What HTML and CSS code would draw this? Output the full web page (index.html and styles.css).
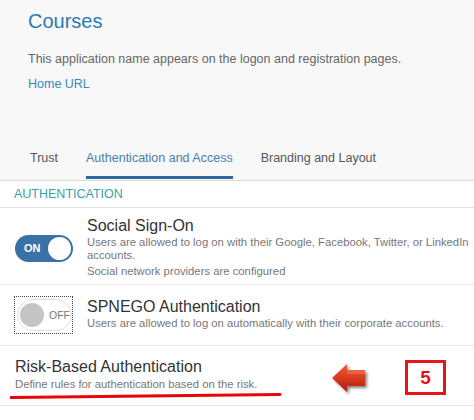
FILE: index.html
```html
<!DOCTYPE html>
<html>
<head>
<meta charset="utf-8">
<link rel="stylesheet" href="styles.css">
</head>
<body>
<div class="header">
  <h1 class="title">Courses</h1>
  <p class="desc">This application name appears on the logon and registration pages.</p>
  <a class="home">Home URL</a>
  <nav class="tabs">
    <span class="tab">Trust</span>
    <span class="tab active">Authentication and Access</span>
    <span class="tab">Branding and Layout</span>
  </nav>
</div>
<div class="section-head">AUTHENTICATION</div>
<div class="row row-social">
  <div class="toggle-col">
    <div class="toggle on"><span class="lbl">ON</span><span class="knob"></span></div>
  </div>
  <div class="text">
    <div class="row-title">Social Sign-On</div>
    <p class="row-desc"><span class="nowrap">Users are allowed to log on with their Google, Facebook, Twitter, or LinkedIn</span><br>accounts.</p>
    <p class="row-desc second">Social network providers are configured</p>
  </div>
</div>
<div class="row row-spnego">
  <div class="toggle-col">
    <div class="focus"><div class="toggle off"><span class="knob"></span><span class="lbl">OFF</span></div></div>
  </div>
  <div class="text">
    <div class="row-title">SPNEGO Authentication</div>
    <p class="row-desc">Users are allowed to log on automatically with their corporate accounts.</p>
  </div>
</div>
<div class="row row-risk">
  <div class="text">
    <div class="row-title">Risk-Based Authentication</div>
    <p class="row-desc">Define rules for authentication based on the risk.</p>
  </div>
  <svg class="underline" width="272" height="8" viewBox="0 0 272 8"><path d="M1 5.5 L270 2.5" stroke="#e8050a" stroke-width="3" stroke-linecap="round" fill="none"/></svg>
  <svg class="arrow" width="44" height="36" viewBox="0 0 44 36">
    <defs>
      <linearGradient id="ag" x1="0" y1="0" x2="0" y2="1">
        <stop offset="0" stop-color="#ee5a3c"/>
        <stop offset="0.5" stop-color="#d83a1f"/>
        <stop offset="1" stop-color="#a81c0c"/>
      </linearGradient>
      <filter id="sh" x="-30%" y="-30%" width="160%" height="160%">
        <feGaussianBlur in="SourceAlpha" stdDeviation="1.6"/>
        <feOffset dx="2" dy="2" result="b"/>
        <feComponentTransfer><feFuncA type="linear" slope="0.5"/></feComponentTransfer>
        <feMerge><feMergeNode/><feMergeNode in="SourceGraphic"/></feMerge>
      </filter>
    </defs>
    <path d="M3 16 L18 2 L18 8 L36 8 L36 24 L18 24 L18 30 Z" fill="url(#ag)" filter="url(#sh)"/>
    <path d="M18 8 L36 8 L36 12 L18 12 Z" fill="#f27a5c" opacity="0.5"/>
  </svg>
  <div class="badge">5</div>
</div>
</body>
</html>
```
FILE: styles.css
```css
* { box-sizing: border-box; }
body {
  margin: 0;
  width: 474px;
  height: 420px;
  overflow: hidden;
  background: #fff;
  font-family: "Liberation Sans", Arial, sans-serif;
}
.header {
  background: #f8f8f8;
  padding: 8px 0 0 28px;
  border-bottom: 1px solid #dcdcdc;
  height: 181px;
}
.title {
  margin: 0;
  font-size: 20px;
  line-height: 26px;
  font-weight: normal;
  color: #2a78b4;
}
.desc {
  margin: 16px 0 0;
  font-size: 12.5px;
  line-height: 18px;
  color: #666;
}
.home {
  display: block;
  margin-top: 7px;
  font-size: 12.5px;
  line-height: 18px;
  color: #3a86c2;
}
.tabs {
  display: flex;
  gap: 28px;
  margin-top: 56px;
  padding-left: 2px;
}
.tab {
  font-size: 12.5px;
  line-height: 18px;
  color: #555;
  padding-bottom: 9px;
  border-bottom: 3px solid transparent;
}
.tab.active {
  color: #4a7eab;
  border-bottom-color: #3068a0;
}
.section-head {
  height: 27px;
  padding-left: 14px;
  font-size: 12.5px;
  line-height: 26px;
  color: #3aa2a4;
  border-bottom: 1px solid #e2e2e2;
}
.row {
  display: flex;
  align-items: center;
  border-bottom: 1px solid #e6e6e6;
  position: relative;
}
.toggle-col {
  width: 87px;
  flex: none;
  padding-left: 15px;
}
.text {
  flex: 1;
  min-width: 0;
}
.row-title {
  font-size: 16px;
  line-height: 20px;
  color: #333;
}
.row-desc {
  margin: 0;
  font-size: 11.3px;
  line-height: 13px;
  color: #777;
}
.nowrap { white-space: nowrap; }
.row-desc.second {
  margin-top: 3px;
}
.row-social {
  height: 77px;
  padding: 7px 0 6px;
}
.row-social .toggle-col { padding-top: 3px; }
.row-spnego {
  height: 61px;
  padding-bottom: 4px;
}
.row-spnego .toggle-col { padding-top: 4px; }
.row-risk {
  height: 60px;
  padding-top: 11px;
  padding-left: 15px;
  align-items: flex-start;
}
.row-risk .row-desc { margin-top: 1px; }
.toggle {
  position: relative;
  display: flex;
  align-items: center;
  border-radius: 16px;
}
.toggle.on {
  width: 58px;
  height: 27px;
  background: #3a72a8;
  padding: 0 2px 0 9px;
  justify-content: space-between;
}
.toggle.on .lbl {
  color: #fff;
  font-weight: bold;
  font-size: 11px;
}
.toggle.on .knob {
  width: 23px;
  height: 23px;
  border-radius: 50%;
  background: #fff;
}
.focus {
  width: 59px;
  height: 38px;
  border: 1px dotted #444;
  padding: 2px 0 0 2px;
  margin-left: -1px;
}
.toggle.off {
  width: 55px;
  height: 32px;
  background: #fff;
  border: 1px solid #dedede;
  padding: 0 0 0 2px;
  gap: 5px;
}
.toggle.off .knob {
  width: 24px;
  height: 24px;
  border-radius: 50%;
  background: #c4c4c4;
}
.toggle.off .lbl {
  font-size: 10.5px;
  color: #777;
}
.underline {
  position: absolute;
  left: 10px;
  top: 46px;
}
.arrow {
  position: absolute;
  left: 329px;
  top: 16px;
}
.badge {
  position: absolute;
  left: 405px;
  top: 14px;
  width: 41px;
  height: 35px;
  border: 3px solid #e8141a;
  color: #e8141a;
  font-weight: bold;
  font-size: 19px;
  line-height: 29px;
  text-align: center;
}
```
